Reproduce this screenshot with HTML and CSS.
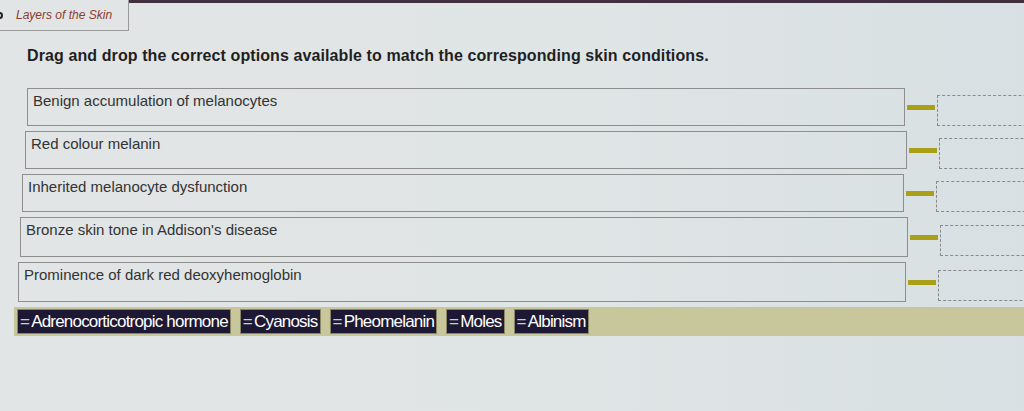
FILE: index.html
```html
<!DOCTYPE html>
<html>
<head>
<meta charset="utf-8">
<link rel="stylesheet" href="styles.css">
</head>
<body>
<div class="top">
  <div class="tab"><span class="dot"></span><span class="tab-label">Layers of the Skin</span></div>
  <div class="topbar"></div>
</div>
<h1 class="title">Drag and drop the correct options available to match the corresponding skin conditions.</h1>
<div class="rows">
  <div class="row r1"><div class="cond">Benign accumulation of melanocytes</div><div class="dash"></div><div class="target"></div></div>
  <div class="row r2"><div class="cond">Red colour melanin</div><div class="dash"></div><div class="target"></div></div>
  <div class="row r3"><div class="cond">Inherited melanocyte dysfunction</div><div class="dash"></div><div class="target"></div></div>
  <div class="row r4"><div class="cond">Bronze skin tone in Addison's disease</div><div class="dash"></div><div class="target"></div></div>
  <div class="row r5"><div class="cond">Prominence of dark red deoxyhemoglobin</div><div class="dash"></div><div class="target"></div></div>
</div>
<div class="options">
  <span class="chip"><span class="grip">=</span>Adrenocorticotropic hormone</span>
  <span class="chip"><span class="grip">=</span>Cyanosis</span>
  <span class="chip"><span class="grip">=</span>Pheomelanin</span>
  <span class="chip"><span class="grip">=</span>Moles</span>
  <span class="chip"><span class="grip">=</span>Albinism</span>
</div>
</body>
</html>
```
FILE: styles.css
```css
html, body {
  margin: 0;
  padding: 0;
}
body {
  width: 1024px;
  height: 411px;
  overflow: hidden;
  background: linear-gradient(90deg, #e2e5e5 0%, #dfe4e5 60%, #d8e0e3 100%);
  font-family: "Liberation Sans", Arial, sans-serif;
  color: #2b2b2b;
}
.top {
  display: flex;
  align-items: flex-start;
  height: 32px;
}
.tab {
  width: 129px;
  height: 31px;
  border-right: 1px solid #9a9a9a;
  border-bottom: 1px solid #9a9a9a;
  display: flex;
  align-items: center;
  box-sizing: border-box;
}
.dot {
  width: 7px;
  height: 7px;
  border: 2px solid #222;
  border-radius: 50%;
  margin-left: -4px;
  box-sizing: border-box;
}
.tab-label {
  margin-left: 13px;
  font-size: 12px;
  font-style: italic;
  color: #8c3b2c;
}
.topbar {
  flex: 1;
  height: 3px;
  background: #40303f;
}
.title {
  margin: 14px 0 0 27px;
  font-size: 16px;
  font-weight: bold;
  color: #1f1f1f;
  line-height: 20px;
  letter-spacing: 0.1px;
}
.rows {
  margin-top: 22px;
  display: flex;
  flex-direction: column;
  gap: 5px;
}
.row {
  display: flex;
  align-items: center;
}
.r1 { margin-left: 27px; }
.r2 { margin-left: 25px; }
.r3 { margin-left: 22px; }
.r4 { margin-left: 20px; }
.r5 { margin-left: 18px; }
.cond {
  flex: 0 0 auto;
  width: 878px;
  height: 38px;
  box-sizing: border-box;
  border: 1px solid #8e8e8e;
  padding: 3px 5px;
  font-size: 15px;
  color: #333;
  line-height: 18px;
}
.r2 .cond, .r3 .cond { width: 882px; }
.r4 .cond, .r5 .cond { width: 888px; height: 40px; }
.dash {
  flex: 0 0 auto;
  width: 28px;
  height: 5px;
  margin-left: 2px;
  background: #a9a018;
}
.target {
  flex: 0 0 auto;
  width: 110px;
  height: 31px;
  margin-left: 2px;
  margin-top: 6px;
  box-sizing: border-box;
  border: 1px dashed #8a8a8a;
  border-right: none;
}
.options {
  margin: 5px 0 0 14px;
  height: 29px;
  background: #c8c79c;
  display: flex;
  align-items: center;
  gap: 9px;
  padding-left: 3px;
}
.chip {
  background: #1d1833;
  color: #fff;
  font-size: 17px;
  height: 23px;
  line-height: 23px;
  padding: 0 2px 0 2px;
  letter-spacing: -0.8px;
  border: 1px solid #8a8668;
  display: flex;
  align-items: center;
}
.grip {
  color: #cfcfcf;
  margin-right: 2px;
}
```
